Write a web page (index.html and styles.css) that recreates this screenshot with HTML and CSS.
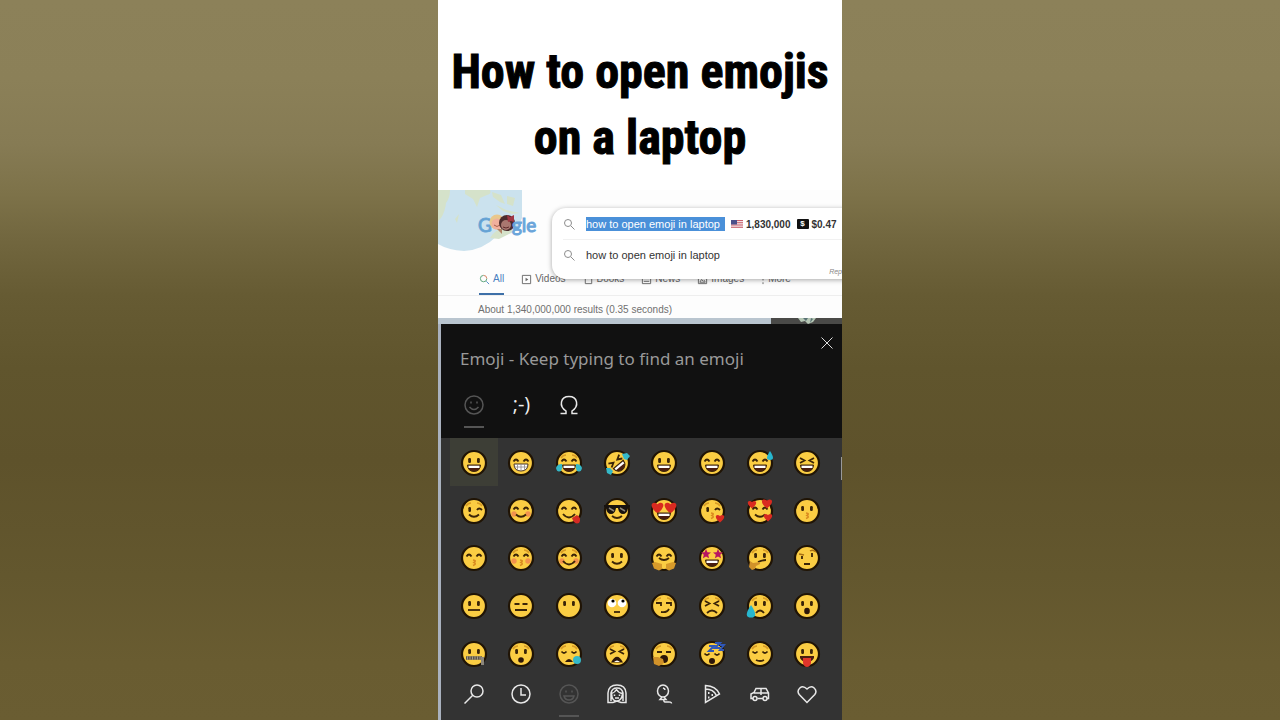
FILE: index.html
```html
<!DOCTYPE html>
<html lang="en">

<head>
    <title>How to open emojis on a laptop</title>
    <meta charset="utf-8" />
    <meta name="viewport" content="width=device-width, initial-scale=1" />
    <link rel="stylesheet" href="styles.css">
</head>

<body>
    <!-- parts shared by the emoji faces -->
    <svg class="defs" aria-hidden="true">
        <defs>
            <circle id="face" r="12" fill="#fbcd43" stroke="#201405" stroke-width="2.2" />
            <g id="eyes" fill="#3a2408"><rect x="-5.8" y="-5" width="2.8" height="5" rx="1.2" /><rect x="3" y="-5" width="2.8" height="5" rx="1.2" /></g>
            <path id="happy" d="M-7.5-1.5q2.5-4 5 0M2.5-1.5q2.5-4 5 0" class="ln" />
            <path id="shut" d="M-7.5-2.5q2.5 3 5 0M2.5-2.5q2.5 3 5 0" class="ln" />
            <path id="squint" d="M-7-5l4.5 2.5-4.5 2.5M7-5l-4.5 2.5 4.5 2.5" class="ln" />
            <path id="brows" d="M-8-5q2-3 5-3M8-5q-2-3-5-3" fill="none" stroke="#d89b25" stroke-width="1.5" />
            <g id="grin"><path d="M-6.5 2h13q-.5 6.500-6.500 6.500t-6.500-6.500z" fill="#4a1d10" stroke="#3a2408" /><path d="M-5.500 2.700h11v2.300h-11z" fill="#fff" /></g>
            <path id="smile" d="M-5 3.500q5 4.500 10 0" class="ln" />
            <g id="blush" fill="#f2924c"><circle cx="-7" cy="3" r="2.700" /><circle cx="7" cy="3" r="2.700" /></g>
            <path id="heart" d="M0 4.500C-7-.5-4-5 0-2 4-5 7-.5 0 4.500z" fill="#d92a20" />
            <path id="star" d="M0-5l1.400 3.200 3.600.3-2.800 2.300.9 3.500L0 2.500-3.100 4.300l.9-3.500L-5-1.500l3.600-.3z" fill="#b71562" />
            <path id="kiss" d="M-1 2q4 .5 1 2.500 3 1.500-1 3" fill="none" stroke="#d98a20" stroke-width="1.600" />
            <path id="drop" d="M0-5Q6 4 0 4T0-5z" fill="#27b7cf" />
        </defs>
    </svg>

    <main class="phone">
        <h1 class="title">How to open emojis on a laptop</h1>

        <section class="google">
            <svg class="map" viewBox="0 0 84 62" aria-hidden="true">
                <path d="M0 0h84v28q-3 9-10 15l-15 3Q45 60 26 61 10 60 0 54z" fill="#cbe2ee" />
                <path d="M0 0h12q0 8-4 13-1 9-5 15L0 31zM27 0h25q2 4-3 5l-7 3-3 9-4-8-8-5zM54 2l9 3 4 9-5-2-7-5zM58 15l10 5 14 3-8 1-9-3zM69 6l8 2-2 8-6-2zM52 48q5-9 14-9l8-3q2 6-3 8l-10 5z" fill="#d5e2ca" />
                <path d="M17 29l4-5-2 9z" fill="#d5e2ca" />
            </svg>
            <a href="#" class="logo" aria-label="Google">
                <span class="logo-g">G</span>
                <svg viewBox="0 0 28 22" width="28" height="22" aria-hidden="true">
                    <circle cx="9" cy="9" r="7.500" fill="#e9c78c" />
                    <circle cx="9" cy="11" r="5.500" fill="#f0b09c" />
                    <path d="M6 12q3 3 6 0" stroke="#a8604f" fill="none" />
                    <circle cx="19" cy="10" r="8" fill="#4b2c2d" />
                    <ellipse cx="18" cy="12" rx="5" ry="5" fill="#a97770" />
                    <path d="M15 14q3 2 6 0" stroke="#5f2b2b" fill="none" />
                    <path d="M19 2l3 2 4-2v7l-3-1-3 1z" fill="#a03642" />
                    <path d="M9 16l5 5v-5z" fill="#b18466" />
                </svg>
                <span>gle</span>
            </a>

            <nav class="tabs">
                <a href="#" class="tab active"><svg viewBox="0 0 12 12"><path d="M8 8l3 3" stroke="#4a86c8" /><path d="M8.500 5A3.500 3.500 0 1 1 5 1.500" stroke="#54a074" /><path d="M5 1.500A3.500 3.500 0 0 1 8.500 5" stroke="#d27a56" /></svg>All</a>
                <a href="#" class="tab"><svg viewBox="0 0 12 12"><path d="M1.500 1.500h9v9h-9z" /><path d="M5 4l3 2-3 2z" fill="#666" stroke="none" /></svg>Videos</a>
                <a href="#" class="tab"><svg viewBox="0 0 12 12"><path d="M2.500 1.500h7v9h-7zM5 1.500v4" /></svg>Books</a>
                <a href="#" class="tab"><svg viewBox="0 0 12 12"><path d="M1.500 2.500h9v8h-9zM3 5h6M3 8h6" /></svg>News</a>
                <a href="#" class="tab"><svg viewBox="0 0 12 12"><path d="M1.500 1.500h9v9h-9zM3 9l2-3 2 2 1-1 1 2z" /></svg>Images</a>
                <a href="#" class="tab more"><svg viewBox="0 0 4 12"><path d="M2 1v2M2 5v2M2 9v2" /></svg>More</a>
            </nav>
            <p class="stats">About 1,340,000,000 results (0.35 seconds)</p>

            <form class="search">
                <div class="search-row">
                    <svg class="lens" viewBox="0 0 12 12"><circle cx="5" cy="5" r="3.500" /><path d="M8 8l3.500 3.500" /></svg>
                    <input type="text" class="query" aria-label="Search" value="how to open emoji in laptop">
                    <svg class="flag" viewBox="0 0 12 8"><path d="M0 0h12v8H0z" fill="#f2dfe2" /><path d="M0 .5h12M0 2.700h12M0 5h12M0 7.300h12" stroke="#c9616d" /><path d="M0 0h6v4.500H0z" fill="#4b4f8a" /></svg>
                    <b>1,830,000</b>
                    <span class="cost">$</span>
                    <b>$0.47</b>
                </div>
                <div class="search-row">
                    <svg class="lens" viewBox="0 0 12 12"><circle cx="5" cy="5" r="3.500" /><path d="M8 8l3.500 3.500" /></svg>
                    <a href="#" class="suggestion">how to open emoji in laptop</a>
                </div>
                <a href="#" class="report">Rep</a>
            </form>
        </section>

        <div class="strip">
            <div class="strip-dark"><svg viewBox="0 0 18 6" width="18" height="6"><path d="M0 0h18l-3 4-5 2-3-3-4 1z" fill="#b5c6b4" /><path d="M5 0l3 3 2-3zM13 0l-1 5 3-4z" fill="#587174" /></svg></div>
        </div>

        <section class="panel">
            <header class="panel-head">
                <div class="panel-top">
                    <input type="text" class="find" aria-label="Find an emoji" placeholder="Emoji - Keep typing to find an emoji">
                    <button class="close" aria-label="Close"><svg viewBox="0 0 12 12" width="12" height="12"><path d="M.5.5l11 11M11.500.5l-11 11" /></svg></button>
                </div>
                <div class="modes">
                    <button class="mode on" aria-label="Emoji"><svg class="icon" viewBox="0 0 20 20"><circle cx="10" cy="10" r="9" /><path d="M5.500 12q4.500 5 9 0M7 6.500v2M13 6.500v2" /></svg></button>
                    <button class="mode" aria-label="Kaomoji"><span>;-)</span></button>
                    <button class="mode" aria-label="Symbols"><svg class="icon" viewBox="0 0 20 20"><path d="M1.500 18.500H7V16C-.5 11 1.500 1.500 10 1.500s10.500 9.500 3 14.500v2.500h5.500" /></svg></button>
                </div>
            </header>

            <div class="grid">
                <button class="emoji on" aria-label="Grinning"><svg viewBox="-14 -14 28 28"><use href="#face" /><use href="#eyes" /><use href="#grin" /></svg></button>
                <button class="emoji" aria-label="Beaming"><svg viewBox="-14 -14 28 28"><use href="#face" /><use href="#happy" /><path d="M-7 1H7q0 7-7 7t-7-7z" fill="#fff" stroke="#4a3520" /><path d="M-6.500 4h13M-3.500 1v6.500M0 1v7M3.500 1v6.500" stroke="#8d8686" stroke-width=".8" /></svg></button>
                <button class="emoji" aria-label="Tears of joy"><svg viewBox="-14 -14 28 28"><use href="#face" /><use href="#brows" /><use href="#happy" /><use href="#grin" /><path d="M-7 1q-5 0-6 4 1 5 5 3 2-3 1-7zM7 1q5 0 6 4-1 5-5 3-2-3-1-7z" fill="#35b9c9" /></svg></button>
                <button class="emoji" aria-label="Rolling on the floor"><svg viewBox="-14 -14 28 28"><use href="#face" /><g transform="rotate(-40)"><use href="#squint" /><use href="#grin" /></g><path d="M5-9l5-1 3 3-3 4-3-1zM-11 5l4 0 3 3-2 4-4-2z" fill="#35b9c9" /></svg></button>
                <button class="emoji" aria-label="Big eyes"><svg viewBox="-14 -14 28 28"><use href="#face" /><use href="#eyes" /><use href="#grin" /></svg></button>
                <button class="emoji" aria-label="Smiling eyes"><svg viewBox="-14 -14 28 28"><use href="#face" /><use href="#happy" /><use href="#grin" /></svg></button>
                <button class="emoji" aria-label="Sweat"><svg viewBox="-14 -14 28 28"><use href="#face" /><use href="#happy" /><use href="#grin" /><use href="#drop" x="10" y="-7" /></svg></button>
                <button class="emoji" aria-label="Squinting"><svg viewBox="-14 -14 28 28"><use href="#face" /><use href="#squint" /><use href="#grin" /></svg></button>

                <button class="emoji" aria-label="Winking"><svg viewBox="-14 -14 28 28"><use href="#face" /><use href="#brows" /><rect x="-5.600" y="-4" width="2.600" height="5" rx="1.200" fill="#3a2408" /><path d="M3-1q2-3 5 0" class="ln" /><use href="#smile" /></svg></button>
                <button class="emoji" aria-label="Blushing"><svg viewBox="-14 -14 28 28"><use href="#face" /><use href="#blush" /><use href="#happy" /><use href="#smile" /></svg></button>
                <button class="emoji" aria-label="Yummy"><svg viewBox="-14 -14 28 28"><use href="#face" /><use href="#happy" /><path d="M-6 3q6 7 12 0" class="ln" /><path d="M3 7l5-3q5 3 2 8-5 2-7-5z" fill="#d52b25" /></svg></button>
                <button class="emoji" aria-label="Sunglasses"><svg viewBox="-14 -14 28 28"><use href="#face" /><path d="M-13-6h26v2l-2 1Q10 3 6 3 2 3 1-3h-2Q-2 3-6 3t-5-6l-2-1z" fill="#17120f" /><path d="M-8-3l5 3M3-3l5 3" stroke="#8c8578" stroke-width="1.500" /><path d="M-5 5q5 4 10 0" class="ln" /></svg></button>
                <button class="emoji" aria-label="Heart eyes"><svg viewBox="-14 -14 28 28"><use href="#face" /><use href="#heart" transform="translate(-6.500 -4) scale(1.400)" /><use href="#heart" transform="translate(6.500 -4) scale(1.400)" /><use href="#grin" /></svg></button>
                <button class="emoji" aria-label="Blowing a kiss"><svg viewBox="-14 -14 28 28"><use href="#face" /><use href="#brows" /><rect x="-5.600" y="-4" width="2.600" height="5" rx="1.200" fill="#3a2408" /><path d="M3-1q2-3 5 0" class="ln" /><use href="#kiss" /><use href="#heart" x="8" y="7" /></svg></button>
                <button class="emoji" aria-label="Smiling with hearts"><svg viewBox="-14 -14 28 28"><use href="#face" /><use href="#happy" /><use href="#smile" /><use href="#heart" x="-8" y="-7" /><use href="#heart" transform="translate(7 -8) scale(1.200)" /><use href="#heart" x="8" y="6" /></svg></button>
                <button class="emoji" aria-label="Kissing"><svg viewBox="-14 -14 28 28"><use href="#face" /><use href="#eyes" /><use href="#kiss" /></svg></button>

                <button class="emoji" aria-label="Kissing, smiling eyes"><svg viewBox="-14 -14 28 28"><use href="#face" /><use href="#happy" /><use href="#kiss" /></svg></button>
                <button class="emoji" aria-label="Kissing, closed eyes"><svg viewBox="-14 -14 28 28"><use href="#face" /><use href="#brows" /><use href="#blush" /><use href="#happy" /><use href="#kiss" /></svg></button>
                <button class="emoji" aria-label="Smiling"><svg viewBox="-14 -14 28 28"><use href="#face" /><use href="#brows" /><use href="#blush" /><use href="#happy" /><path d="M-6 3q6 7 12 0" class="ln" /></svg></button>
                <button class="emoji" aria-label="Slight smile"><svg viewBox="-14 -14 28 28"><use href="#face" /><use href="#eyes" /><use href="#smile" /></svg></button>
                <button class="emoji" aria-label="Hugging"><svg viewBox="-14 -14 28 28"><use href="#face" /><use href="#happy" /><path d="M-5 0q5 4 10 0" class="ln" /><path d="M-12 5l3-1 7 2v5l-3 1.500-5-2zM12 5L9 4 2 6v5l3 1.500 5-2z" fill="#d89b2b" /></svg></button>
                <button class="emoji" aria-label="Star struck"><svg viewBox="-14 -14 28 28"><use href="#face" /><use href="#star" x="-6" y="-4" /><use href="#star" x="6" y="-4" /><use href="#grin" /></svg></button>
                <button class="emoji" aria-label="Thinking"><svg viewBox="-14 -14 28 28"><use href="#face" /><use href="#brows" /><use href="#eyes" /><path d="M-2 4q4-2 8-2" class="ln" /><path d="M-10 3l3 2 7-1v2l-4 2-1 3-3 1-3-3z" fill="#d1922a" /></svg></button>
                <button class="emoji" aria-label="Raised eyebrow"><svg viewBox="-14 -14 28 28"><use href="#face" /><path d="M-8-4l5 1M3-7q3-2 6 1" fill="none" stroke="#a87014" stroke-width="1.500" /><path d="M-5-2v3M5-5v4M-3 6h6" class="ln" /></svg></button>

                <button class="emoji" aria-label="Neutral"><svg viewBox="-14 -14 28 28"><use href="#face" /><use href="#eyes" /><path d="M-6 4H6" class="ln" /></svg></button>
                <button class="emoji" aria-label="Expressionless"><svg viewBox="-14 -14 28 28"><use href="#face" /><path d="M-6.500-2h5M1.500-2h5M-6 4H6" class="ln" /></svg></button>
                <button class="emoji" aria-label="No mouth"><svg viewBox="-14 -14 28 28"><use href="#face" /><use href="#eyes" /></svg></button>
                <button class="emoji" aria-label="Rolling eyes"><svg viewBox="-14 -14 28 28"><use href="#face" /><circle cx="-5" cy="-3" r="4.300" fill="#fff" /><circle cx="5" cy="-3" r="4.300" fill="#fff" /><circle cx="-4" cy="-5" r="1.600" /><circle cx="6" cy="-5" r="1.600" /><path d="M-3 6h6" class="ln" /></svg></button>
                <button class="emoji" aria-label="Smirking"><svg viewBox="-14 -14 28 28"><use href="#face" /><use href="#brows" /><path d="M-8-3h5v3M2-3h5v3M-3 6q6 1 8-3" class="ln" /></svg></button>
                <button class="emoji" aria-label="Persevering"><svg viewBox="-14 -14 28 28"><use href="#face" /><use href="#brows" /><use href="#squint" /><path d="M-5 7q5-5 10 0" class="ln" /></svg></button>
                <button class="emoji" aria-label="Sad but relieved"><svg viewBox="-14 -14 28 28"><use href="#face" /><use href="#brows" /><use href="#eyes" /><path d="M-4 7q4-5 8 0" class="ln" /><use href="#drop" transform="translate(-9 6) scale(1.400)" /></svg></button>
                <button class="emoji" aria-label="Open mouth"><svg viewBox="-14 -14 28 28"><use href="#face" /><use href="#eyes" /><ellipse cy="5" rx="2.800" ry="3.300" fill="#2c1608" /></svg></button>

                <button class="emoji" aria-label="Zipper mouth"><svg viewBox="-14 -14 28 28"><use href="#face" /><use href="#eyes" /><path d="M-8 4H8" stroke="#5b5348" stroke-width="3.500" /><path d="M-7 4H8" stroke="#a39b8b" stroke-width="3.500" stroke-dasharray="1 1.500" /><path d="M7 3h3v8H7z" fill="#8b867c" /></svg></button>
                <button class="emoji" aria-label="Hushed"><svg viewBox="-14 -14 28 28"><use href="#face" /><use href="#brows" /><use href="#eyes" /><circle cy="6" r="2.800" fill="#2c1608" /></svg></button>
                <button class="emoji" aria-label="Sleepy"><svg viewBox="-14 -14 28 28"><use href="#face" /><use href="#brows" /><use href="#shut" /><path d="M-4 8q4-6 8 0z" fill="#2c1608" /><circle cx="8" cy="6" r="4" fill="#35b9c9" /></svg></button>
                <button class="emoji" aria-label="Tired"><svg viewBox="-14 -14 28 28"><use href="#face" /><use href="#brows" /><use href="#squint" /><path d="M-6 8.500Q0-3 6 8.500z" fill="#2c1608" /><path d="M-3 8q3-3 6 0z" fill="#fff" /></svg></button>
                <button class="emoji" aria-label="Yawning"><svg viewBox="-14 -14 28 28"><use href="#face" /><use href="#brows" /><path d="M-7-2h5M2-2h5" class="ln" /><circle cy="5" r="4" fill="#2c1608" /><path d="M-11 3l5 0 5 2 1 4-5 3-5-2z" fill="#d1922a" /></svg></button>
                <button class="emoji" aria-label="Sleeping"><svg viewBox="-14 -14 28 28"><use href="#face" /><use href="#shut" y="2" /><circle cy="7" r="3" fill="#2c1608" /><path d="M-3-8h5l-5 5h5M3-11h5l-5 5h5M8-9h4l-4 5h4" fill="none" stroke="#2f57b8" stroke-width="2" /></svg></button>
                <button class="emoji" aria-label="Relieved"><svg viewBox="-14 -14 28 28"><use href="#face" /><use href="#brows" /><use href="#shut" /><path d="M-4 6q4 2 8 0" class="ln" /></svg></button>
                <button class="emoji" aria-label="Tongue out"><svg viewBox="-14 -14 28 28"><use href="#face" /><use href="#eyes" /><path d="M-7 2H7v2q-2 4-7 4t-7-4z" fill="#4a1d10" /><path d="M-4 4h8v5q-1 4-4 4t-4-4z" fill="#e0352b" /></svg></button>
            </div>

            <nav class="cats">
                <button class="cat" aria-label="Search"><svg class="icon" viewBox="0 0 20 20"><circle cx="13" cy="7" r="6" /><path d="M9 11l-8.500 8.500" /></svg></button>
                <button class="cat" aria-label="Recent"><svg class="icon" viewBox="0 0 20 20"><circle cx="10" cy="10" r="9" /><path d="M10 4v7h5" /></svg></button>
                <button class="cat on" aria-label="Smileys"><svg class="icon" viewBox="0 0 20 20"><circle cx="10" cy="10" r="9" /><path d="M5 12h10q-1 4-5 4t-5-4zM7 6.500v2M13 6.500v2" /></svg></button>
                <button class="cat" aria-label="People"><svg class="icon" viewBox="0 0 20 20"><path d="M1 18.500V9Q1.500 1 10 1t9 8v9.500h-5L10 17l-4 1.500zM4 17V9Q5 4 10 4t6 5v8M4.500 9.500Q8 8.500 9.500 5.500q2 3.500 6 4-.5 7-5.500 7.500T4.500 9.500z" /><path d="M7.500 10.500v1.500M12.500 10.500v1.500M8 14h4" /></svg></button>
                <button class="cat" aria-label="Celebration"><svg class="icon" viewBox="0 0 20 20"><ellipse cx="9" cy="7" rx="5.500" ry="6" /><path d="M8 13l-2 2.500h6L10 13M10 15.500q-1 3 3 2.500 4.500-.5 4.500 1.500M9 4q2 .5 2 2" /></svg></button>
                <button class="cat" aria-label="Food"><svg class="icon" viewBox="0 0 20 20"><path d="M3.500 1.500v17L17.500 10Q14 2 3.500 1.500zM3.500 5q8 0 11 6.500" /><path d="M6 9h1.500M9.500 11H11M6 13.500h1.500" stroke-width="2" /></svg></button>
                <button class="cat" aria-label="Transport"><svg class="icon" viewBox="0 0 20 20"><path d="M3 14.500H1V10l3-1.500L6 4.500h10l2.500 4.500v5.500H17M7.500 14.500H13M4 9h15M11 4.500V11" /><circle cx="5" cy="14.500" r="2" /><circle cx="15" cy="14.500" r="2" /></svg></button>
                <button class="cat" aria-label="Symbols"><svg class="icon" viewBox="0 0 20 20"><path d="M10 18.500L2.200 10.500C-1 6 4.500-.5 10 5c5.500-5.500 11 1 7.800 5.500z" /></svg></button>
            </nav>
        </section>
    </main>
</body>

</html>
```
FILE: styles.css
```css
* {
    box-sizing: border-box;
}
body {
    margin: 0;
    font-family: "Liberation Sans", Arial, sans-serif;
    background: linear-gradient(#8c8159 0%, #8b8058 11%, #867b54 20%, #7d7249 27%, #72673f 33%, #665b33 41%, #60552d 51%, #5e522b 64%, #63572e 80%, #695c31 92%, #6a5d32 100%);
}
button {
    padding: 0;
    border: 0;
    background: none;
    color: inherit;
    font: inherit;
}
a {
    color: inherit;
    text-decoration: none;
}
.defs {
    position: absolute;
    width: 0;
    height: 0;
}
.phone {
    display: flex;
    flex-direction: column;
    max-width: 404px;
    min-height: 100vh;
    margin: 0 auto;
    overflow: hidden;
    background: #fff;
}
.title {
    margin: 0;
    padding: 39px 8px 19px;
    font-family: "Roboto Condensed", "Liberation Sans Narrow", "Liberation Sans", sans-serif;
    font-size: 48px;
    line-height: 66px;
    font-weight: bold;
    text-align: center;
    color: #000;
    -webkit-text-stroke: 1px #000;
}

/* search page */
.google {
    position: relative;
    height: 128px;
    padding-top: 22px;
    background: #fdfdfd;
    overflow: hidden;
}
.map {
    position: absolute;
    top: 0;
    left: 0;
    width: 84px;
    height: 62px;
}
.logo {
    position: relative;
    display: flex;
    align-items: center;
    width: 60px;
    height: 24px;
    margin-left: 40px;
    font-family: Lato, sans-serif;
    font-size: 19px;
    color: #6aa5da;
    -webkit-text-stroke: 1px #6aa5da;
}
.logo svg {
    flex: none;
    margin: 0 -4px;
}
.logo-g {
    color: #5f9fc4;
}
.tabs {
    display: flex;
    gap: 17px;
    height: 60px;
    padding: 34px 0 0 41px;
    border-bottom: 1px solid #eee;
    font-size: 10px;
    line-height: 18px;
    color: #666;
}
.tab {
    display: flex;
    gap: 3px;
    height: 25px;
}
.tab svg {
    width: 11px;
    height: 11px;
    margin-top: 4px;
    fill: none;
    stroke: #666;
}
.more svg {
    width: 4px;
}
.tab.active {
    color: #4a7fc0;
    border-bottom: 2px solid #3e70a8;
}
.stats {
    margin: 6px 0 0 40px;
    font-size: 10px;
    line-height: 16px;
    color: #707070;
}
.search {
    position: absolute;
    top: 18px;
    left: 114px;
    right: -20px;
    height: 71px;
    padding: 1px 0 0 11px;
    border-radius: 14px;
    background: #fff;
    box-shadow: 0 1px 5px rgba(0, 0, 0, .35);
}
.search-row {
    display: flex;
    align-items: center;
    height: 30px;
    font-size: 10px;
    color: #333;
}
.search-row + .search-row {
    border-top: 1px solid #f1f1f1;
}
.lens {
    width: 12px;
    height: 12px;
    margin-right: 11px;
    fill: none;
    stroke: #8d8d8d;
}
.query {
    width: 139px;
    height: 14px;
    margin-right: 6px;
    padding: 0;
    border: 0;
    background: #4a90d9;
    color: #fff;
    font: 11px "Liberation Sans", Arial, sans-serif;
}
.suggestion {
    font-size: 11px;
}
.flag {
    width: 12px;
    height: 8px;
    margin-right: 3px;
}
.cost {
    width: 12px;
    margin: 0 3px 0 6px;
    border-radius: 1px;
    background: #111;
    color: #fff;
    font-size: 8px;
    line-height: 10px;
    font-weight: bold;
    text-align: center;
}
.report {
    position: absolute;
    top: 59px;
    right: 20px;
    font-size: 7px;
    line-height: 10px;
    font-style: italic;
    color: #888;
}
.strip {
    display: flex;
    justify-content: flex-end;
    height: 6px;
    background: #b9c5cf;
}
.strip-dark {
    display: flex;
    width: 71px;
    padding-left: 27px;
    background: #4a4a48;
}

/* emoji panel */
.panel {
    display: flex;
    flex-direction: column;
    flex: 1;
    border-left: 3px solid #a9b1be;
    background: #333;
    color: #eee;
}
.panel-head {
    height: 114px;
    background: #111;
}
.panel-top {
    display: flex;
    align-items: flex-start;
}
.find {
    flex: 1;
    min-width: 0;
    height: 68px;
    padding: 0 0 0 19px;
    border: 0;
    background: none;
    color: #eee;
    font: 17px "Noto Sans", "Open Sans", sans-serif;
}
.find::placeholder {
    color: #999;
    opacity: 1;
}
.close {
    width: 31px;
    height: 39px;
}
.close svg {
    stroke: #ddd;
}
.modes,
.grid,
.cats {
    display: grid;
    grid-template-columns: repeat(8, 1fr);
    padding: 0 11px 0 9px;
}
.mode,
.cat {
    display: flex;
    flex-direction: column;
    align-items: center;
}
.mode {
    height: 38px;
    padding-top: 3px;
    font: 20px/18px "Open Sans", "Noto Sans", sans-serif;
}
.icon {
    width: 20px;
    height: 20px;
    fill: none;
    stroke: #e8e8e8;
    stroke-width: 1.5;
}
.on .icon {
    stroke: #555;
}
.mode.on::after,
.cat.on::after {
    content: "";
    width: 20px;
    height: 2px;
    margin-top: 11px;
    background: #555;
}
.grid {
    position: relative;
    flex: 1;
    grid-auto-rows: 1fr;
}
/* scroll thumb */
.grid::after {
    content: "";
    position: absolute;
    top: 19px;
    right: 0;
    width: 1px;
    height: 23px;
    background: #999;
}
.emoji {
    display: flex;
    align-items: center;
    justify-content: center;
    padding-top: 2px;
}
.emoji.on {
    background: #3d3e36;
}
.emoji svg {
    width: 28px;
    height: 28px;
}
.ln {
    fill: none;
    stroke: #3a2408;
    stroke-width: 1.8;
}
.cats {
    height: 43px;
    padding-top: 7px;
}
```
